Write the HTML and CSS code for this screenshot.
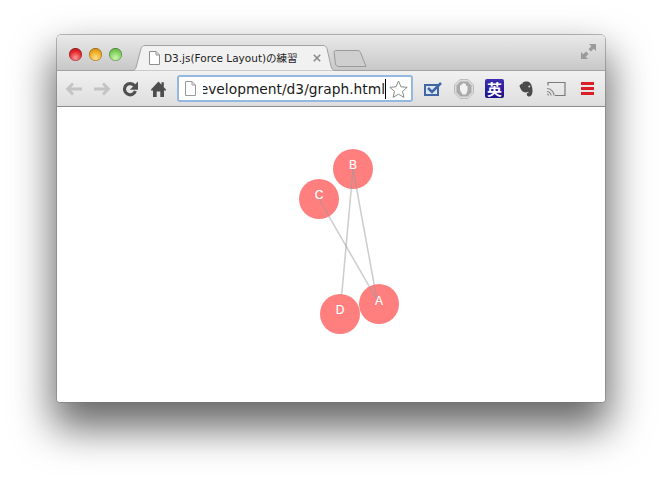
FILE: index.html
```html
<!DOCTYPE html>
<html lang="ja">
<head>
<meta charset="utf-8">
<title>D3.js(Force Layout)の練習</title>
<link rel="stylesheet" href="styles.css">
</head>
<body>
<div class="window">
  <div class="tabstrip">
    <div class="lights">
      <span class="light red"></span>
      <span class="light yellow"></span>
      <span class="light green"></span>
    </div>
    <div class="tab">
      <svg class="tab-shape" width="202" height="26" viewBox="0 0 202 26"><path d="M0 25.500C1.500 25.500 2.500 24 3.200 22L8 3.500C8.700 1.500 10 .5 12 .5H190C192 .5 193 1.500 194 3.500L198 21.500C198.800 24 200 25.500 202 25.500" fill="#f1f1f1" stroke="#a2a2a2"/></svg>
      <svg class="page-icon" width="11" height="14" viewBox="0 0 11 14"><path d="M.5.5H7L10.500 4V13.500H.5Z" fill="#fff" stroke="#8f8f8f"/><path d="M7 .5V4H10.500" fill="none" stroke="#8f8f8f"/></svg>
      <span class="tab-title">D3.js(Force Layout)の練習</span>
      <svg class="tab-close" width="8" height="8" viewBox="0 0 8 8"><path d="M.8.8 7.200 7.200M7.200.8 .8 7.200" stroke="#8a8a8a" stroke-width="1.600"/></svg>
    </div>
    <svg class="newtab" width="34" height="17" viewBox="0 0 34 17"><path d="M1 2C1 1 2 .5 3 .5H24C26 .5 27 1 27.500 2.500L33 16.500H6C4 16.500 3 15.500 2.500 14Z" fill="#cfcfcf" stroke="#9a9a9a"/></svg>
    <svg class="expand" width="15" height="15" viewBox="0 0 15 15"><path d="M8 0H15V7L12.700 4.700 10 7.500 7.500 5 10.300 2.300ZM0 15V8L2.300 10.300 5 7.500 7.500 10 4.700 12.700 7 15Z" fill="#9b9b9b"/></svg>
  </div>
  <div class="toolbar">
    <div class="nav-slot"><svg width="18" height="14" viewBox="0 0 18 14"><path d="M8 1.500 2.500 7 8 12.500M3 7H17" fill="none" stroke="#c4c4c4" stroke-width="2.800"/></svg></div>
    <div class="nav-slot"><svg width="18" height="14" viewBox="0 0 18 14"><path d="M10 1.500 15.500 7 10 12.500M15 7H1" fill="none" stroke="#c4c4c4" stroke-width="2.800"/></svg></div>
    <div class="nav-slot"><svg width="16" height="16" viewBox="0 0 16 16"><path d="M12.600 4.800A5.600 5.600 0 1 0 13.400 10" fill="none" stroke="#505050" stroke-width="3.200"/><path d="M16 .5V8.700H7.800Z" fill="#505050"/></svg></div>
    <div class="nav-slot"><svg width="15" height="16" viewBox="0 0 15 16"><path d="M0 8.500 7.500 .5 10.500 3.700V1.200H12.800V6.200L15 8.500V9.500H13V16H9.300V10.500H5.700V16H2V9.500H0Z" fill="#4d4d4d"/></svg></div>
    <div class="omnibox">
      <svg class="omni-page" width="11" height="15" viewBox="0 0 11 15"><path d="M.5.5H7L10.500 4V14.500H.5Z" fill="#fff" stroke="#9a9a9a"/><path d="M7 .5V4H10.500" fill="none" stroke="#9a9a9a"/></svg>
      <div class="url-clip"><span class="url">development/d3/graph.html</span></div>
      <svg class="star" width="19" height="18" viewBox="0 0 19 18"><path d="M9.500 1 12 6.800 18.200 7.300 13.500 11.400 14.900 17.300 9.500 14.200 4.100 17.300 5.500 11.400 .8 7.300 7 6.800Z" fill="#fff" stroke="#8b8b8b"/></svg>
    </div>
    <div class="extensions">
      <div class="ext-slot"><svg width="18" height="14" viewBox="0 0 18 14"><path d="M1 3H14V13H1Z" fill="#dfe6f0" stroke="#3f67a8" stroke-width="2"/><path d="M4 6 8 10 17 1" fill="none" stroke="#3f67a8" stroke-width="2.500"/></svg></div>
      <div class="ext-slot"><svg width="20" height="20" viewBox="0 0 20 20"><path d="M6 .5H14L19.500 6V14L14 19.500H6L.5 14V6Z" fill="#dcdcdc" stroke="#bbb"/><path d="M6.500 2.500H13.500L17.500 6.500V13.500L13.500 17.500H6.500L2.500 13.500V6.500Z" fill="#a9a9a9"/><path d="M6 11V6.500Q6.800 5.800 7.500 6.500V5Q8.300 4.300 9 5V4.300Q9.800 3.700 10.500 4.300V5Q11.300 4.300 12 5V7Q12.800 6.300 13.500 7V11.500L12 15.500H8.500Z" fill="#f1f1f1"/></svg></div>
      <div class="ext-slot"><div class="eiji"><span>英</span></div></div>
      <div class="ext-slot"><svg width="14" height="16" viewBox="0 0 14 16"><path d="M3.500 3.500V1.800C5 .5 8 .2 10 1 12 2 13.500 6 13.500 9.500 13.500 13 12.500 15.500 10 15.500 8.500 15.500 7.800 14.500 7.800 13 8 11.500 10 11.500 10.500 12.500 10 11 8 10.500 7 11.500 4.500 11.500 2.500 10 1.500 7.500 1 6.500 .5 5.500 .5 4.500L2.800 2.500Z" fill="#4a4a4a"/><circle cx="10.300" cy="5.500" r="1" fill="#d8d8d8"/></svg></div>
      <div class="ext-slot"><svg width="19" height="14" viewBox="0 0 19 14"><path d="M1 3.500V.5H18V13.500H8" fill="none" stroke="#7b7b7b" stroke-width="1.200"/><path d="M0 6.500A7 7 0 0 1 7 13.500M0 9.500A4 4 0 0 1 4 13.500M0 12A1.500 1.500 0 0 1 1.500 13.500" fill="none" stroke="#8a8a8a" stroke-width="1.200"/></svg></div>
      <div class="ext-slot"><div class="menu"><i></i><i></i><i></i></div></div>
    </div>
  </div>
  <div class="content">
    <svg class="graph" width="548" height="295" viewBox="57 107 548 295">
      <circle class="node" cx="353" cy="169" r="20"/>
      <line class="link" x1="353" y1="169" x2="340" y2="314"/>
      <circle class="node" cx="340" cy="314" r="20"/>
      <circle class="node" cx="319" cy="199" r="20"/>
      <circle class="node" cx="379" cy="304" r="20"/>
      <line class="link" x1="319" y1="199" x2="377" y2="300"/>
      <line class="link" x1="353" y1="169" x2="377" y2="300"/>
      <text class="label" x="353" y="169">B</text>
      <text class="label" x="319" y="199">C</text>
      <text class="label" x="340" y="314">D</text>
      <text class="label" x="379" y="305">A</text>
    </svg>
  </div>
</div>
</body>
</html>
```
FILE: styles.css
```css
html, body {
  margin: 0;
  height: 481px;
  overflow: hidden;
  background: #fff;
}
body {
  padding: 35px 57px 0;
  box-sizing: border-box;
  font-family: "DejaVu Sans", "Noto Sans CJK JP", sans-serif;
}
.window {
  width: 548px;
  height: 367px;
  display: flex;
  flex-direction: column;
  border-radius: 4px 4px 3px 3px;
  box-shadow: 0 0 0 .5px #777, 0 22px 40px 4px rgba(0, 0, 0, .6);
}
.tabstrip {
  height: 36px;
  flex: none;
  box-sizing: border-box;
  display: flex;
  align-items: flex-end;
  padding-left: 12px;
  border-radius: 4px 4px 0 0;
  background: linear-gradient(#e9e9e9, #c8c8c8);
  border-bottom: 1px solid #a2a2a2;
}
.lights {
  display: flex;
  gap: 7px;
  align-self: flex-start;
  margin-top: 13px;
}
.light {
  width: 13px;
  height: 13px;
  border-radius: 50%;
  box-shadow: inset 0 0 0 .5px rgba(0, 0, 0, .4);
}
.red { background: radial-gradient(circle at 50% 75%, #ff9b9b, #e0262b 55%, #a8101a); }
.yellow { background: radial-gradient(circle at 50% 75%, #ffe08a, #eda81f 55%, #b87a10); }
.green { background: radial-gradient(circle at 50% 75%, #cdf5b0, #7fce5a 55%, #4c9a34); }
.tab {
  width: 202px;
  height: 26px;
  margin-left: 11px;
  margin-bottom: -1px;
  position: relative;
  display: flex;
  align-items: center;
  box-sizing: border-box;
  padding: 0 14px 1px 16px;
  flex: none;
}
.tab-shape {
  position: absolute;
  left: 0;
  top: 0;
}
.page-icon {
  position: relative;
  flex: none;
}
.tab-title {
  position: relative;
  margin-left: 4px;
  font-size: 10.500px;
  color: #222;
  white-space: nowrap;
  flex: 1;
}
.tab-close {
  position: relative;
  flex: none;
}
.newtab {
  margin: 0 0 3px -2px;
  flex: none;
}
.expand {
  margin: 0 9px 11px auto;
  flex: none;
}
.toolbar {
  height: 36px;
  flex: none;
  box-sizing: border-box;
  display: flex;
  align-items: center;
  padding-left: 3px;
  background: linear-gradient(#f1f1f1, #dedede);
  border-bottom: 1px solid #8c8c8c;
}
.nav-slot {
  width: 28px;
  flex: none;
  display: flex;
  justify-content: center;
}
.omnibox {
  width: 236px;
  height: 27px;
  flex: none;
  box-sizing: border-box;
  margin-left: 5px;
  display: flex;
  align-items: center;
  padding: 0 3px 0 6px;
  background: #fff;
  border: 2px solid #94b9e0;
  border-radius: 3px;
}
.omni-page {
  flex: none;
}
.url-clip {
  width: 183px;
  margin-left: 7px;
  flex: none;
  display: flex;
  justify-content: flex-end;
  overflow: hidden;
}
.url {
  font-size: 13.800px;
  line-height: 20px;
  color: #1a1a1a;
  white-space: nowrap;
  border-right: 1px solid #000;
}
.star {
  margin-left: 3px;
  flex: none;
}
.extensions {
  display: flex;
  align-items: center;
  margin-left: 4px;
  flex: none;
}
.ext-slot {
  width: 31px;
  flex: none;
  display: flex;
  justify-content: center;
  align-items: center;
}
.eiji {
  width: 19px;
  height: 19px;
  border-radius: 2px;
  background: linear-gradient(#3d2fb0, #1c0f8a);
  display: flex;
  align-items: center;
  justify-content: center;
}
.eiji span {
  color: #fff;
  font-family: "Noto Sans CJK JP", sans-serif;
  font-weight: 700;
  font-size: 15px;
  line-height: 1;
}
.menu {
  width: 13px;
  display: flex;
  flex-direction: column;
  gap: 2px;
}
.menu i {
  display: block;
  height: 3px;
  background: #dc1f26;
}
.content {
  flex: 1;
  background: #fff;
  border-radius: 0 0 3px 3px;
  overflow: hidden;
}
.graph {
  display: block;
}
.node {
  fill: #ff7f7f;
}
.link {
  stroke: #999;
  stroke-opacity: .5;
  stroke-width: 1.500;
}
.label {
  fill: #fff;
  stroke: #fff;
  stroke-width: .15;
  font-family: "Liberation Sans", sans-serif;
  font-size: 12px;
  text-anchor: middle;
}
```
